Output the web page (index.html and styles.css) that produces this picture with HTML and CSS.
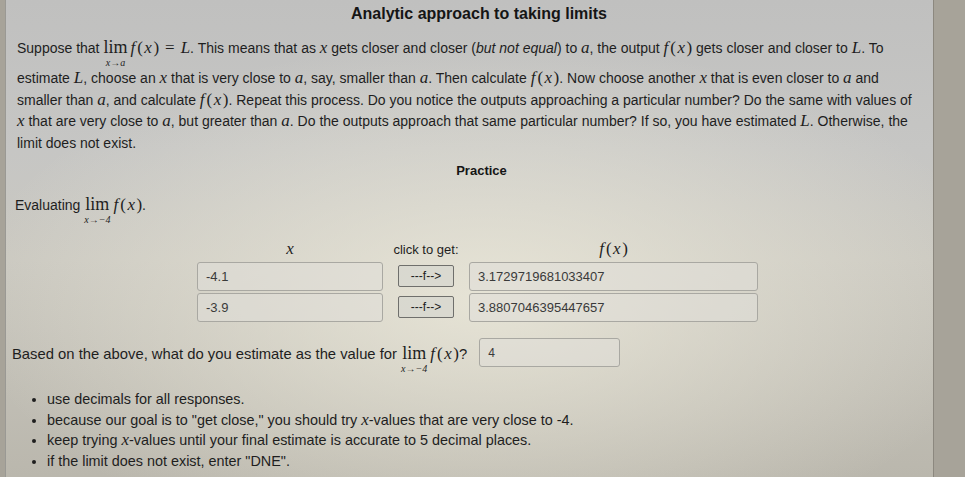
FILE: index.html
```html
<!DOCTYPE html>
<html>
<head>
<meta charset="utf-8">
<link rel="stylesheet" href="styles.css">
</head>
<body>
<div class="frame">
  <div class="intro">
    <h1 class="title">Analytic approach to taking limits</h1>
    <p class="desc">Suppose that <span class="lim"><span class="lim-word">lim</span><span class="lim-sub">x→a</span></span><span class="mx"><i>f</i>(<i>x</i>)</span><span class="eq">=</span><span class="m">L</span>. This means that as <span class="m">x</span> gets closer and closer (<i>but not equal</i>) to <span class="m">a</span>, the output <span class="mx"><i>f</i>(<i>x</i>)</span> gets closer and closer to <span class="m">L</span>. To<br>estimate <span class="m">L</span>, choose an <span class="m">x</span> that is very close to <span class="m">a</span>, say, smaller than <span class="m">a</span>. Then calculate <span class="mx"><i>f</i>(<i>x</i>)</span>. Now choose another <span class="m">x</span> that is even closer to <span class="m">a</span> and<br>smaller than <span class="m">a</span>, and calculate <span class="mx"><i>f</i>(<i>x</i>)</span>. Repeat this process. Do you notice the outputs approaching a particular number? Do the same with values of<br><span class="m">x</span> that are very close to <span class="m">a</span>, but greater than <span class="m">a</span>. Do the outputs approach that same particular number? If so, you have estimated <span class="m">L</span>. Otherwise, the<br>limit does not exist.</p>
  </div>

  <h2 class="practice">Practice</h2>

  <p class="evaluating">Evaluating <span class="lim"><span class="lim-word">lim</span><span class="lim-sub">x→−4</span></span><span class="mx"><i>f</i>(<i>x</i>)</span>.</p>

  <div class="table">
    <div class="th"><span class="m">x</span></div>
    <div class="th">click to get:</div>
    <div class="th"><span class="mx"><i>f</i>(<i>x</i>)</span></div>

    <div class="field">-4.1</div>
    <div class="cell"><span class="btn">---f--&gt;</span></div>
    <div class="field">3.1729719681033407</div>

    <div class="field">-3.9</div>
    <div class="cell"><span class="btn">---f--&gt;</span></div>
    <div class="field">3.8807046395447657</div>
  </div>

  <div class="answer">
    <span class="answer-text">Based on the above, what do you estimate as the value for <span class="lim"><span class="lim-word">lim</span><span class="lim-sub">x→−4</span></span><span class="mx"><i>f</i>(<i>x</i>)</span>?</span>
    <span class="field answer-field">4</span>
  </div>

  <ul class="notes">
    <li>use decimals for all responses.</li>
    <li>because our goal is to "get close," you should try <span class="m">x</span>-values that are very close to -4.</li>
    <li>keep trying <span class="m">x</span>-values until your final estimate is accurate to 5 decimal places.</li>
    <li>if the limit does not exist, enter "DNE".</li>
  </ul>
</div>
</body>
</html>
```

FILE: styles.css
```css
html, body {
  margin: 0;
  padding: 0;
}
body {
  width: 965px;
  height: 477px;
  overflow: hidden;
  font-family: "Liberation Sans", Arial, sans-serif;
  font-size: 14px;
  color: #1e1e1e;
  background: #a7a399;
}
.frame {
  margin-left: 5px;
  width: 929px;
  height: 477px;
  border-left: 1px solid #9a9994;
  border-right: 1px solid #8c887f;
  background:
    radial-gradient(ellipse 520px 260px at 480px 300px, rgba(238, 235, 220, 0.8), rgba(238, 235, 220, 0) 100%),
    linear-gradient(180deg, #c0c0bf 0px, #c6c6c4 150px, #cac8c0 260px, #bab7ad 477px);
  box-sizing: border-box;
}
.intro {
  padding: 0 0 0 11px;
}
.title {
  margin: 0;
  padding: 5px 0 0 8px;
  font-size: 16px;
  font-weight: bold;
  text-align: center;
  color: #151515;
}
.desc {
  margin: 15px 0 0 0;
  line-height: 21.7px;
  white-space: nowrap;
}
.m, .mx, .eq {
  font-family: "Liberation Serif", "Times New Roman", serif;
  font-style: italic;
  font-size: 17px;
  line-height: 1;
}
.eq {
  font-style: normal;
  margin: 0 6px;
}
.mx {
  font-style: normal;
}
.mx i {
  font-style: italic;
  padding: 0 1.5px;
}
.mx i:first-child {
  padding-left: 0;
  padding-right: 2px;
}
.lim {
  display: inline-flex;
  flex-direction: column;
  align-items: center;
  line-height: 1;
  margin-right: 3px;
  vertical-align: baseline;
}
.lim-word {
  font-family: "Liberation Serif", "Times New Roman", serif;
  font-size: 18px;
}
.lim-sub {
  font-family: "Liberation Serif", "Times New Roman", serif;
  font-style: italic;
  font-size: 10px;
  margin-top: 2px;
}
.practice {
  margin: 8px 0 0 0;
  padding-left: 24px;
  font-size: 13px;
  font-weight: bold;
  text-align: center;
  color: #151515;
}
.evaluating {
  margin: 17px 0 0 9px;
}
.table {
  display: grid;
  grid-template-columns: 186px 72px 289px;
  column-gap: 7px;
  row-gap: 2px;
  margin: 15px 0 0 191px;
  align-items: center;
}
.th {
  text-align: center;
  height: 20px;
  line-height: 20px;
  font-size: 13px;
}
.field {
  height: 29px;
  box-sizing: border-box;
  border: 1px solid #a9a8a2;
  border-radius: 3px;
  background: rgba(224, 223, 216, 0.55);
  padding: 0 8px;
  line-height: 27px;
  font-size: 13px;
  color: #3a3a3a;
}
.cell {
  display: flex;
  justify-content: center;
}
.btn {
  width: 56px;
  height: 22px;
  box-sizing: border-box;
  border: 1px solid #6f6f6c;
  border-radius: 2px;
  background: rgba(214, 213, 206, 0.7);
  text-align: center;
  line-height: 20px;
  font-size: 12px;
}
.answer {
  display: flex;
  align-items: flex-start;
  gap: 12px;
  margin: 13px 0 0 6px;
  font-size: 14.8px;
}
.answer-text {
  padding-top: 9px;
}
.answer-field {
  width: 141px;
  margin-top: 3px;
  font-size: 12px;
  line-height: 29px;
  padding-left: 8px;
}
.notes {
  margin: 15px 0 0 0;
  padding-left: 41px;
  line-height: 20.7px;
  font-size: 14.4px;
}
```
